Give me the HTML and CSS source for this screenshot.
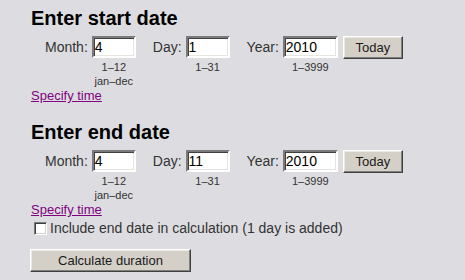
FILE: index.html
```html
<!DOCTYPE html>
<html>
<head>
<meta charset="utf-8">
<link rel="stylesheet" href="styles.css">
</head>
<body>
<div class="page">
  <section class="block">
    <h2 class="title">Enter start date</h2>
    <div class="row">
      <div class="field">
        <label class="lbl">Month:</label>
        <div class="col col-sm">
          <input class="inp" type="text" value="4">
          <div class="hint">1–12<br>jan–dec</div>
        </div>
      </div>
      <div class="field">
        <label class="lbl">Day:</label>
        <div class="col col-sm">
          <input class="inp" type="text" value="1">
          <div class="hint">1–31</div>
        </div>
      </div>
      <div class="field">
        <label class="lbl">Year:</label>
        <div class="col col-lg">
          <input class="inp" type="text" value="2010">
          <div class="hint">1–3999</div>
        </div>
        <button class="btn btn-today" type="button">Today</button>
      </div>
    </div>
    <div class="linkline"><a class="link" href="#">Specify time</a></div>
  </section>

  <section class="block block-2">
    <h2 class="title">Enter end date</h2>
    <div class="row">
      <div class="field">
        <label class="lbl">Month:</label>
        <div class="col col-sm">
          <input class="inp" type="text" value="4">
          <div class="hint">1–12<br>jan–dec</div>
        </div>
      </div>
      <div class="field">
        <label class="lbl">Day:</label>
        <div class="col col-sm">
          <input class="inp" type="text" value="11">
          <div class="hint">1–31</div>
        </div>
      </div>
      <div class="field">
        <label class="lbl">Year:</label>
        <div class="col col-lg">
          <input class="inp" type="text" value="2010">
          <div class="hint">1–3999</div>
        </div>
        <button class="btn btn-today" type="button">Today</button>
      </div>
    </div>
    <div class="linkline"><a class="link" href="#">Specify time</a></div>
    <label class="check">
      <input class="cb" type="checkbox">
      <span>Include end date in calculation (1 day is added)</span>
    </label>
    <button class="btn btn-calc" type="button">Calculate duration</button>
  </section>
</div>
</body>
</html>
```
FILE: styles.css
```css
html, body {
  margin: 0;
  padding: 0;
  background: #dddde1;
}

body {
  font-family: "Liberation Sans", Arial, sans-serif;
  color: #2a2a2a;
}

.page {
  padding: 7px 0 0 31px;
}

.block-2 {
  margin-top: 17px;
}

.title {
  margin: 0;
  font-size: 20px;
  line-height: 23px;
  font-weight: bold;
  color: #000;
}

.row {
  display: flex;
  align-items: flex-start;
  gap: 17px;
  margin-top: 6px;
  padding-left: 14px;
}

.field {
  display: flex;
  align-items: flex-start;
}

.lbl {
  font-size: 14px;
  line-height: 22px;
  margin-right: 4px;
  color: #333;
}

.col {
  display: flex;
  flex-direction: column;
  align-items: center;
}

.col-sm { width: 44px; }
.col-lg { width: 55px; }

.inp {
  box-sizing: border-box;
  width: 100%;
  height: 22px;
  margin: 0;
  padding: 0 0 0 1px;
  font-family: "Liberation Sans", Arial, sans-serif;
  font-size: 14px;
  color: #000;
  background: #fff;
  border: 2px solid;
  border-color: #7b7b7b #fff #fff #7b7b7b;
  box-shadow: inset 1px 1px 0 #404040, inset -1px -1px 0 #e6e4df;
  outline: none;
}

.hint {
  margin-top: 2px;
  font-size: 11px;
  line-height: 14px;
  text-align: center;
  color: #333;
  white-space: nowrap;
}

.btn {
  box-sizing: border-box;
  margin: 0;
  padding: 0;
  font-family: "Liberation Sans", Arial, sans-serif;
  font-size: 13px;
  color: #1a1a1a;
  background: #d4d0c8;
  border: 1px solid;
  border-color: #fff #404040 #404040 #fff;
  box-shadow: inset -1px -1px 0 #808080, inset 1px 1px 0 #ece9e2;
}

.btn-today {
  width: 60px;
  height: 23px;
  margin-left: 5px;
}

.linkline {
  font-size: 13px;
  line-height: 16px;
}

.link {
  color: #800080;
  text-decoration: underline;
}

.check {
  display: flex;
  align-items: center;
  margin-top: 2px;
  margin-left: 3px;
  font-size: 14px;
  line-height: 16px;
  color: #333;
}

.cb {
  appearance: none;
  -webkit-appearance: none;
  box-sizing: border-box;
  width: 13px;
  height: 13px;
  margin: 0 3px 0 0;
  background: #fff;
  border: 1px solid;
  border-color: #7b7b7b #fff #fff #7b7b7b;
  box-shadow: inset 1px 1px 0 #404040, inset -1px -1px 0 #d4d0c8;
}

.btn-calc {
  display: block;
  width: 161px;
  height: 23px;
  margin-top: 13px;
  margin-left: -1px;
}
```
